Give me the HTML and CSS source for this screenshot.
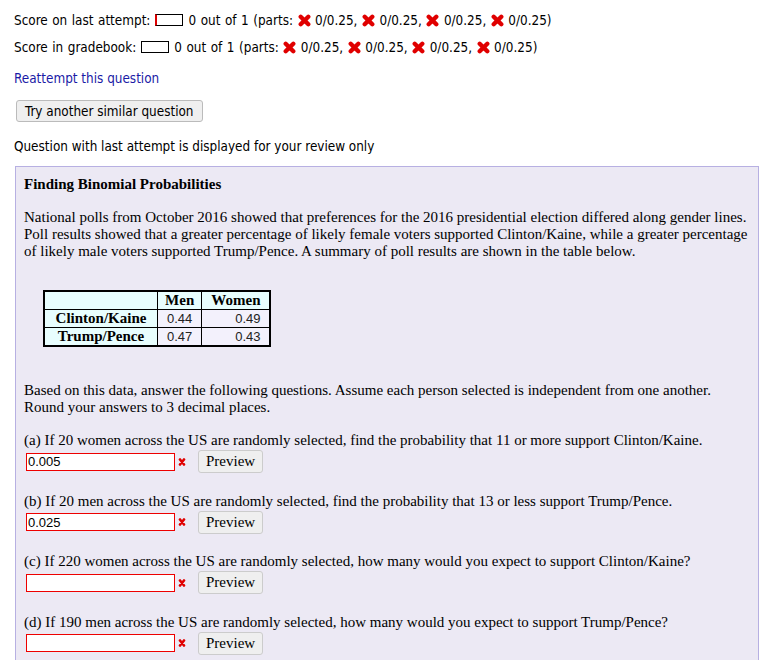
FILE: index.html
```html
<!DOCTYPE html>
<html lang="en">
<head>
<meta charset="utf-8">
<title>Finding Binomial Probabilities</title>
<link rel="stylesheet" href="styles.css">
</head>
<body>
<div class="page">
  <p class="score">Score on last attempt: <span class="meter meter-red"></span> 0 out of 1 (parts:
    <svg class="xmark" viewBox="0 0 12 12"><path d="M2.5 2.5 L9.5 9.5 M9.5 2.5 L2.5 9.5"/></svg> 0/0.25,
    <svg class="xmark" viewBox="0 0 12 12"><path d="M2.5 2.5 L9.5 9.5 M9.5 2.5 L2.5 9.5"/></svg> 0/0.25,
    <svg class="xmark" viewBox="0 0 12 12"><path d="M2.5 2.5 L9.5 9.5 M9.5 2.5 L2.5 9.5"/></svg> 0/0.25,
    <svg class="xmark" viewBox="0 0 12 12"><path d="M2.5 2.5 L9.5 9.5 M9.5 2.5 L2.5 9.5"/></svg> 0/0.25)</p>
  <p class="score">Score in gradebook: <span class="meter"></span> 0 out of 1 (parts:
    <svg class="xmark" viewBox="0 0 12 12"><path d="M2.5 2.5 L9.5 9.5 M9.5 2.5 L2.5 9.5"/></svg> 0/0.25,
    <svg class="xmark" viewBox="0 0 12 12"><path d="M2.5 2.5 L9.5 9.5 M9.5 2.5 L2.5 9.5"/></svg> 0/0.25,
    <svg class="xmark" viewBox="0 0 12 12"><path d="M2.5 2.5 L9.5 9.5 M9.5 2.5 L2.5 9.5"/></svg> 0/0.25,
    <svg class="xmark" viewBox="0 0 12 12"><path d="M2.5 2.5 L9.5 9.5 M9.5 2.5 L2.5 9.5"/></svg> 0/0.25)</p>
  <p class="reattempt"><a href="#">Reattempt this question</a></p>
  <button class="btn-similar" type="button">Try another similar question</button>
  <p class="review-note">Question with last attempt is displayed for your review only</p>

  <div class="question">
    <h3 class="q-title">Finding Binomial Probabilities</h3>
    <p class="q-text">National polls from October 2016 showed that preferences for the 2016 presidential election differed along gender lines. Poll results showed that a greater percentage of likely female voters supported Clinton/Kaine, while a greater percentage of likely male voters supported Trump/Pence. A summary of poll results are shown in the table below.</p>

    <table class="poll">
      <tr><th class="blank"></th><th class="col-men">Men</th><th class="col-women">Women</th></tr>
      <tr><th>Clinton/Kaine</th><td>0.44</td><td>0.49</td></tr>
      <tr><th>Trump/Pence</th><td>0.47</td><td>0.43</td></tr>
    </table>

    <p class="q-text instructions">Based on this data, answer the following questions. Assume each person selected is independent from one another. Round your answers to 3 decimal places.</p>

    <div class="part">
      <p class="part-text">(a) If 20 women across the US are randomly selected, find the probability that 11 or more support Clinton/Kaine.</p>
      <div class="answer-row">
        <input class="answer" type="text" value="0.005">
        <svg class="xsmall" viewBox="0 0 8 8"><path d="M2 1.5 L6 6.5 M6 1.5 L2 6.5"/></svg>
        <button class="preview" type="button">Preview</button>
      </div>
    </div>

    <div class="part">
      <p class="part-text">(b) If 20 men across the US are randomly selected, find the probability that 13 or less support Trump/Pence.</p>
      <div class="answer-row">
        <input class="answer" type="text" value="0.025">
        <svg class="xsmall" viewBox="0 0 8 8"><path d="M2 1.5 L6 6.5 M6 1.5 L2 6.5"/></svg>
        <button class="preview" type="button">Preview</button>
      </div>
    </div>

    <div class="part">
      <p class="part-text">(c) If 220 women across the US are randomly selected, how many would you expect to support Clinton/Kaine?</p>
      <div class="answer-row">
        <input class="answer" type="text" value="">
        <svg class="xsmall" viewBox="0 0 8 8"><path d="M2 1.5 L6 6.5 M6 1.5 L2 6.5"/></svg>
        <button class="preview" type="button">Preview</button>
      </div>
    </div>

    <div class="part">
      <p class="part-text">(d) If 190 men across the US are randomly selected, how many would you expect to support Trump/Pence?</p>
      <div class="answer-row">
        <input class="answer" type="text" value="">
        <svg class="xsmall" viewBox="0 0 8 8"><path d="M2 1.5 L6 6.5 M6 1.5 L2 6.5"/></svg>
        <button class="preview" type="button">Preview</button>
      </div>
    </div>
  </div>
</div>
</body>
</html>
```

FILE: styles.css
```css
html, body {
  margin: 0;
  padding: 0;
  background: #fff;
}

.page {
  padding: 13px 14px 0 14px;
  font-family: "DejaVu Sans Condensed", "DejaVu Sans", sans-serif;
  font-size: 13.4px;
  color: #000;
}

.score {
  margin: 0 0 11px 0;
  line-height: 16px;
  white-space: nowrap;
  word-spacing: 0.7px;
}

.meter {
  display: inline-block;
  width: 26px;
  height: 10px;
  border: 1px solid #000;
  vertical-align: -1px;
  margin: 0 1px 0 0;
}

.meter-red {
  border-left: 2px solid #d00;
  width: 25px;
}

.xmark {
  width: 13px;
  height: 13px;
  vertical-align: -2px;
}

.xmark path {
  stroke: #e00000;
  stroke-width: 4;
  stroke-linecap: round;
  fill: none;
}

.reattempt {
  margin: 15px 0 13px 0;
  line-height: 16px;
}

.reattempt a {
  color: #1a1aa6;
  text-decoration: none;
}

.btn-similar {
  display: block;
  margin: 0 0 0 2px;
  height: 22px;
  padding: 0 8px;
  font-family: inherit;
  font-size: 13.4px;
  color: #000;
  background: #efefef;
  border: 1px solid #bbb;
  border-radius: 3px;
}

.review-note {
  margin: 17px 0 11px 0;
  line-height: 16px;
}

.question {
  margin: 0 0 0 1px;
  padding: 9px 9px 20px 8px;
  background: #ece9f4;
  border: 1px solid #b7b0e2;
  font-family: "Liberation Serif", "Times New Roman", serif;
  font-size: 15px;
  line-height: 17px;
  color: #000;
}

.q-title {
  margin: 0;
  font-size: 15px;
  font-weight: bold;
  line-height: 17px;
}

.q-text {
  margin: 16px 0 0 0;
}

.poll {
  margin: 30px 0 0 19px;
  border-collapse: collapse;
  border: 2px solid #000;
  font-size: 15px;
  line-height: 17px;
}

.poll th,
.poll td {
  border: 1px solid #000;
  padding: 0 9px 0 9px;
}

.poll th {
  background: #e8fefe;
  font-weight: bold;
  text-align: center;
}

.poll th.blank {
  width: 94px;
}

.poll td {
  background: #f3f1fc;
  text-align: right;
  font-family: "Liberation Sans", Arial, sans-serif;
  font-size: 13px;
  font-weight: normal;
  color: #222;
}

.poll th.col-men {
  padding: 0 5px 0 5px;
}

.instructions {
  margin-top: 35px;
}

.part {
  margin-top: 19.5px;
}

.instructions + .part {
  margin-top: 16px;
}

.part-text {
  margin: 0;
}

.answer-row {
  display: flex;
  align-items: center;
  margin-top: 1px;
}

.answer {
  box-sizing: border-box;
  width: 149px;
  height: 18px;
  margin: 0 0 0 2px;
  padding: 0 1px;
  border: 1px solid #e00;
  background: #fff;
  font-family: "Liberation Sans", Arial, sans-serif;
  font-size: 13px;
  color: #000;
  outline: none;
}

.xsmall {
  width: 8px;
  height: 8px;
  margin: 0 0 0 3px;
}

.xsmall path {
  stroke: #e00000;
  stroke-width: 2.6;
  stroke-linecap: round;
  fill: none;
}

.preview {
  margin: 0 0 0 12px;
  height: 23px;
  padding: 0 7px;
  font-family: "Liberation Serif", "Times New Roman", serif;
  font-size: 15px;
  color: #000;
  background: #efefef;
  border: 1px solid #ccc;
  border-radius: 3px;
}
```
